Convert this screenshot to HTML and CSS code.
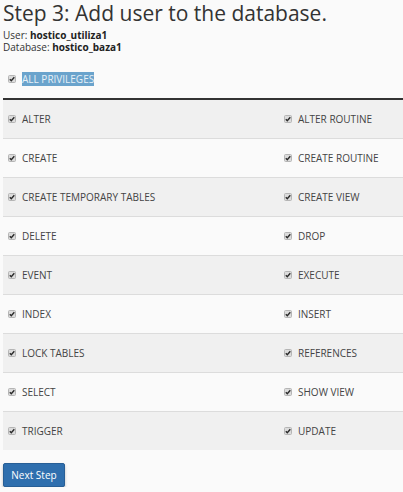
FILE: index.html
```html
<!DOCTYPE html>
<html>
<head>
<meta charset="utf-8">
<link rel="stylesheet" href="styles.css">
</head>
<body>
<div class="page">
  <h1 class="title">Step 3: Add user to the database.</h1>
  <div class="info">
    <div>User: <b>hostico_utiliza1</b></div>
    <div>Database: <b>hostico_baza1</b></div>
  </div>
  <div class="all">
    <span class="cb"><svg viewBox="0 0 8 8" width="8" height="8"><rect x="0.5" y="0.5" width="7" height="7" rx="1" fill="#dcdcdc" stroke="#b5b5b5"/><path d="M1.8 4.2 L3.3 5.8 L6.3 2.2" fill="none" stroke="#2a2a2a" stroke-width="1.4"/></svg></span>
    <span class="sel">ALL PRIVILEGES</span>
  </div>
  <div class="table">
    <div class="row"><div class="cell"><span class="cb"><svg viewBox="0 0 8 8" width="8" height="8"><rect x="0.5" y="0.5" width="7" height="7" rx="1" fill="#dcdcdc" stroke="#b5b5b5"/><path d="M1.8 4.2 L3.3 5.8 L6.3 2.2" fill="none" stroke="#2a2a2a" stroke-width="1.4"/></svg></span>ALTER</div><div class="cell"><span class="cb"><svg viewBox="0 0 8 8" width="8" height="8"><rect x="0.5" y="0.5" width="7" height="7" rx="1" fill="#dcdcdc" stroke="#b5b5b5"/><path d="M1.8 4.2 L3.3 5.8 L6.3 2.2" fill="none" stroke="#2a2a2a" stroke-width="1.4"/></svg></span>ALTER ROUTINE</div></div>
    <div class="row"><div class="cell"><span class="cb"><svg viewBox="0 0 8 8" width="8" height="8"><rect x="0.5" y="0.5" width="7" height="7" rx="1" fill="#dcdcdc" stroke="#b5b5b5"/><path d="M1.8 4.2 L3.3 5.8 L6.3 2.2" fill="none" stroke="#2a2a2a" stroke-width="1.4"/></svg></span>CREATE</div><div class="cell"><span class="cb"><svg viewBox="0 0 8 8" width="8" height="8"><rect x="0.5" y="0.5" width="7" height="7" rx="1" fill="#dcdcdc" stroke="#b5b5b5"/><path d="M1.8 4.2 L3.3 5.8 L6.3 2.2" fill="none" stroke="#2a2a2a" stroke-width="1.4"/></svg></span>CREATE ROUTINE</div></div>
    <div class="row"><div class="cell"><span class="cb"><svg viewBox="0 0 8 8" width="8" height="8"><rect x="0.5" y="0.5" width="7" height="7" rx="1" fill="#dcdcdc" stroke="#b5b5b5"/><path d="M1.8 4.2 L3.3 5.8 L6.3 2.2" fill="none" stroke="#2a2a2a" stroke-width="1.4"/></svg></span>CREATE TEMPORARY TABLES</div><div class="cell"><span class="cb"><svg viewBox="0 0 8 8" width="8" height="8"><rect x="0.5" y="0.5" width="7" height="7" rx="1" fill="#dcdcdc" stroke="#b5b5b5"/><path d="M1.8 4.2 L3.3 5.8 L6.3 2.2" fill="none" stroke="#2a2a2a" stroke-width="1.4"/></svg></span>CREATE VIEW</div></div>
    <div class="row"><div class="cell"><span class="cb"><svg viewBox="0 0 8 8" width="8" height="8"><rect x="0.5" y="0.5" width="7" height="7" rx="1" fill="#dcdcdc" stroke="#b5b5b5"/><path d="M1.8 4.2 L3.3 5.8 L6.3 2.2" fill="none" stroke="#2a2a2a" stroke-width="1.4"/></svg></span>DELETE</div><div class="cell"><span class="cb"><svg viewBox="0 0 8 8" width="8" height="8"><rect x="0.5" y="0.5" width="7" height="7" rx="1" fill="#dcdcdc" stroke="#b5b5b5"/><path d="M1.8 4.2 L3.3 5.8 L6.3 2.2" fill="none" stroke="#2a2a2a" stroke-width="1.4"/></svg></span>DROP</div></div>
    <div class="row"><div class="cell"><span class="cb"><svg viewBox="0 0 8 8" width="8" height="8"><rect x="0.5" y="0.5" width="7" height="7" rx="1" fill="#dcdcdc" stroke="#b5b5b5"/><path d="M1.8 4.2 L3.3 5.8 L6.3 2.2" fill="none" stroke="#2a2a2a" stroke-width="1.4"/></svg></span>EVENT</div><div class="cell"><span class="cb"><svg viewBox="0 0 8 8" width="8" height="8"><rect x="0.5" y="0.5" width="7" height="7" rx="1" fill="#dcdcdc" stroke="#b5b5b5"/><path d="M1.8 4.2 L3.3 5.8 L6.3 2.2" fill="none" stroke="#2a2a2a" stroke-width="1.4"/></svg></span>EXECUTE</div></div>
    <div class="row"><div class="cell"><span class="cb"><svg viewBox="0 0 8 8" width="8" height="8"><rect x="0.5" y="0.5" width="7" height="7" rx="1" fill="#dcdcdc" stroke="#b5b5b5"/><path d="M1.8 4.2 L3.3 5.8 L6.3 2.2" fill="none" stroke="#2a2a2a" stroke-width="1.4"/></svg></span>INDEX</div><div class="cell"><span class="cb"><svg viewBox="0 0 8 8" width="8" height="8"><rect x="0.5" y="0.5" width="7" height="7" rx="1" fill="#dcdcdc" stroke="#b5b5b5"/><path d="M1.8 4.2 L3.3 5.8 L6.3 2.2" fill="none" stroke="#2a2a2a" stroke-width="1.4"/></svg></span>INSERT</div></div>
    <div class="row"><div class="cell"><span class="cb"><svg viewBox="0 0 8 8" width="8" height="8"><rect x="0.5" y="0.5" width="7" height="7" rx="1" fill="#dcdcdc" stroke="#b5b5b5"/><path d="M1.8 4.2 L3.3 5.8 L6.3 2.2" fill="none" stroke="#2a2a2a" stroke-width="1.4"/></svg></span>LOCK TABLES</div><div class="cell"><span class="cb"><svg viewBox="0 0 8 8" width="8" height="8"><rect x="0.5" y="0.5" width="7" height="7" rx="1" fill="#dcdcdc" stroke="#b5b5b5"/><path d="M1.8 4.2 L3.3 5.8 L6.3 2.2" fill="none" stroke="#2a2a2a" stroke-width="1.4"/></svg></span>REFERENCES</div></div>
    <div class="row"><div class="cell"><span class="cb"><svg viewBox="0 0 8 8" width="8" height="8"><rect x="0.5" y="0.5" width="7" height="7" rx="1" fill="#dcdcdc" stroke="#b5b5b5"/><path d="M1.8 4.2 L3.3 5.8 L6.3 2.2" fill="none" stroke="#2a2a2a" stroke-width="1.4"/></svg></span>SELECT</div><div class="cell"><span class="cb"><svg viewBox="0 0 8 8" width="8" height="8"><rect x="0.5" y="0.5" width="7" height="7" rx="1" fill="#dcdcdc" stroke="#b5b5b5"/><path d="M1.8 4.2 L3.3 5.8 L6.3 2.2" fill="none" stroke="#2a2a2a" stroke-width="1.4"/></svg></span>SHOW VIEW</div></div>
    <div class="row"><div class="cell"><span class="cb"><svg viewBox="0 0 8 8" width="8" height="8"><rect x="0.5" y="0.5" width="7" height="7" rx="1" fill="#dcdcdc" stroke="#b5b5b5"/><path d="M1.8 4.2 L3.3 5.8 L6.3 2.2" fill="none" stroke="#2a2a2a" stroke-width="1.4"/></svg></span>TRIGGER</div><div class="cell"><span class="cb"><svg viewBox="0 0 8 8" width="8" height="8"><rect x="0.5" y="0.5" width="7" height="7" rx="1" fill="#dcdcdc" stroke="#b5b5b5"/><path d="M1.8 4.2 L3.3 5.8 L6.3 2.2" fill="none" stroke="#2a2a2a" stroke-width="1.4"/></svg></span>UPDATE</div></div>
  </div>
  <div class="actions">
    <button class="btn">Next Step</button>
  </div>
</div>
</body>
</html>
```

FILE: styles.css
```css
html, body {
  margin: 0;
  padding: 0;
  background: #fafafa;
}
body {
  font-family: "Open Sans", "Liberation Sans", sans-serif;
  color: #333;
}
.page {
  padding: 0 0 0 3px;
}
.title {
  margin: 0;
  padding-top: 0;
  font-size: 21px;
  font-weight: 400;
  line-height: 26px;
  color: #333;
}
.info {
  margin-top: 3px;
  font-size: 10px;
  line-height: 12px;
  color: #333;
}
.info b {
  font-weight: 700;
  color: #222;
}
.all {
  display: flex;
  align-items: center;
  height: 14px;
  margin-top: 19px;
  padding-left: 5px;
  font-size: 10px;
  color: #444;
}
.cb {
  display: inline-flex;
  width: 8px;
  height: 8px;
  margin-right: 6px;
}
.cb svg {
  display: block;
}
.sel {
  background: #6aa3cc;
  color: #e6f0f7;
  line-height: 14px;
}
.table {
  margin-top: 12px;
  border-top: 2px solid #333;
}
.row {
  display: grid;
  grid-template-columns: 276px 1fr;
  height: 38px;
  border-top: 1px solid #dcdcdc;
}
.row:first-child {
  border-top: none;
}
.row:nth-child(odd) {
  background: #f0f0f0;
}
.cell {
  display: flex;
  align-items: center;
  padding-left: 5px;
  font-size: 10px;
  color: #444;
}
.actions {
  padding-top: 12px;
}
.btn {
  font-family: "Open Sans", "Liberation Sans", sans-serif;
  font-size: 10px;
  color: #fff;
  background: #2f6fae;
  border: 1px solid #285f96;
  border-radius: 2px;
  height: 24px;
  width: 62px;
  padding: 0;
  box-shadow: 0 2px 3px rgba(0, 0, 0, 0.25);
}
```
